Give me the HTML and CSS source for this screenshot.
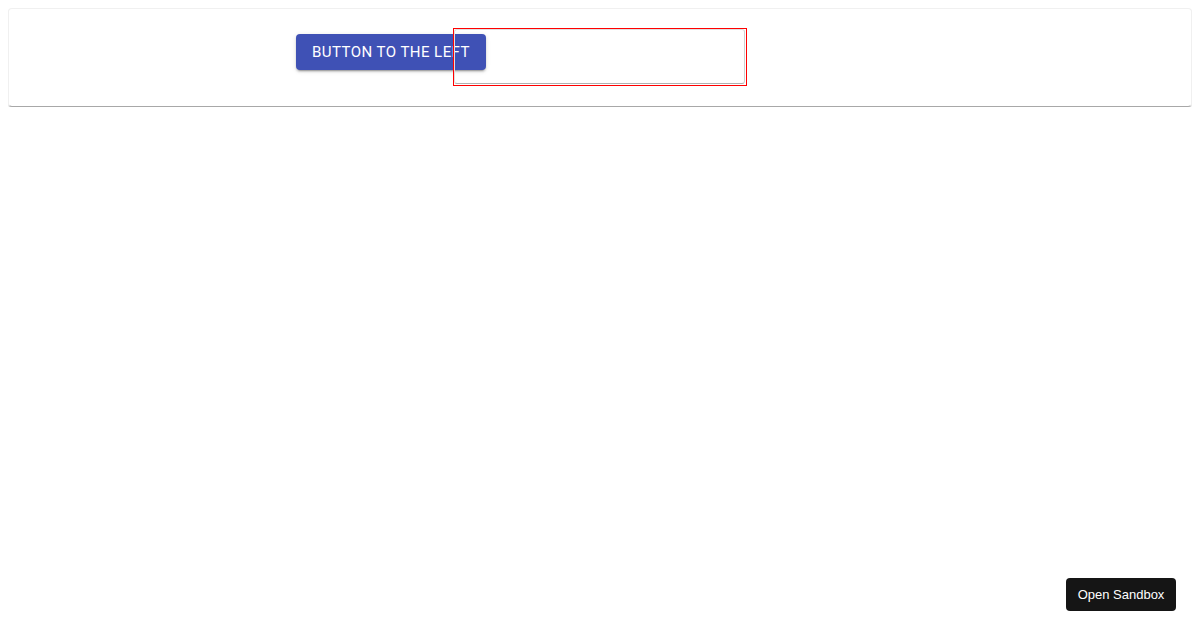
FILE: index.html
```html
<!DOCTYPE html>
<html>
<head>
<meta charset="utf-8">
<link rel="stylesheet" href="styles.css">
</head>
<body>
<div class="paper">
  <div class="row">
    <button class="btn">Button to the left</button>
    <div class="anchor">
      <div class="overlay"><div class="inner"></div></div>
    </div>
  </div>
</div>
<a class="sandbox">Open Sandbox</a>
</body>
</html>
```
FILE: styles.css
```css
html, body { background: #fff; }
body {
  margin: 8px;
  font-family: Roboto, "Liberation Sans", sans-serif;
}
.paper {
  background: #fff;
  border-radius: 4px;
  border: 1px solid #f0f0f0;
  border-bottom: 1px solid #a8a8a8;
  box-shadow: 0 1px 1px rgba(0,0,0,0.12);
  padding: 19px 19px 21px 287px;
  height: 57px;
}
.row {
  display: flex;
  align-items: flex-start;
  height: 57px;
}
.btn {
  margin-top: 6px;
  height: 36px;
  width: 190px;
  padding: 0 16px;
  border: none;
  border-radius: 4px;
  background: #3f51b5;
  color: #fff;
  font-family: Roboto, "Liberation Sans", sans-serif;
  font-size: 15px;
  font-weight: 400;
  text-transform: uppercase;
  letter-spacing: 0.03em;
  white-space: nowrap;
  box-shadow: 0px 3px 1px -2px rgba(0,0,0,0.2), 0px 2px 2px 0px rgba(0,0,0,0.14), 0px 1px 5px 0px rgba(0,0,0,0.12);
}
.anchor {
  position: relative;
  width: 0;
  height: 57px;
}
.overlay {
  position: absolute;
  left: -33px;
  top: 0;
  width: 292px;
  height: 56px;
  border: 1px solid #ff0000;
}
.inner {
  box-sizing: border-box;
  width: 291px;
  height: 55px;
  border: 1px solid #e0e0e0;
  border-bottom-color: #b0b0b0;
  border-right-color: #d0d0d0;
  border-radius: 3px;
}
.sandbox {
  position: fixed;
  right: 24px;
  bottom: 19px;
  width: 110px;
  height: 33px;
  display: flex;
  align-items: center;
  justify-content: center;
  box-sizing: border-box;
  background: #151515;
  color: #fff;
  border-radius: 4px;
  font-family: "Liberation Sans", Arial, sans-serif;
  font-size: 13px;
}
```
